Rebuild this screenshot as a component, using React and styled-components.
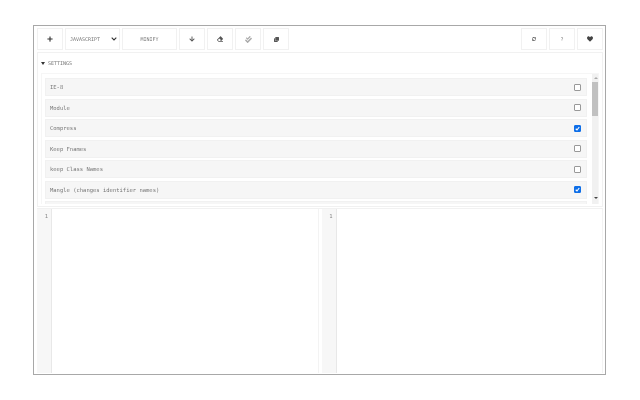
import React from 'react'
import styled, { createGlobalStyle } from 'styled-components'
import { FaArrowDown, FaEraser, FaCheckDouble, FaClone, FaHeart, FaSyncAlt, FaPlus } from 'react-icons/fa'

const Global = createGlobalStyle`
  html, body { margin: 0; padding: 0; background: #fff; width: 640px; height: 400px; overflow: hidden; }
  body { font-family: "DejaVu Sans Mono", monospace; }
`

const Page = styled.div`
  width: 640px;
  height: 400px;
  padding: 25px 34px 25px 33px;
  box-sizing: border-box;
`

const Frame = styled.div`
  height: 100%;
  box-sizing: border-box;
  border: 1px solid #a8a8a8;
  padding: 2px 2px 1px 3px;
  display: flex;
  flex-direction: column;
  will-change: transform;
`

const Toolbar = styled.div`
  display: flex;
  justify-content: space-between;
  height: 23px;
  flex-shrink: 0;
`

const Group = styled.div`
  display: flex;
  gap: 2px;
`

const Btn = styled.div`
  width: ${p => p.$w || 26}px;
  height: 22px;
  box-sizing: border-box;
  border: 1px solid #f1f1f1;
  display: flex;
  align-items: center;
  justify-content: ${p => p.$between ? 'space-between' : 'center'};
  padding: ${p => p.$between ? '0 2px 0 4px' : '0'};
  color: #777;
  font-size: 5px;
  text-transform: uppercase;
`

const Settings = styled.div`
  margin-top: 1px;
  height: 155px;
  box-sizing: border-box;
  border: 1px solid #f1f1f1;
  padding: 0 3px 0 3px;
  flex-shrink: 0;
`

const Summary = styled.div`
  height: 20px;
  display: flex;
  align-items: center;
  gap: 3px;
  font-size: 5px;
  color: #777;
  text-transform: uppercase;
`

const Arrow = styled.span`
  width: 0;
  height: 0;
  border-left: 2px solid transparent;
  border-right: 2px solid transparent;
  border-top: 3px solid #333;
`

const ListBox = styled.div`
  height: 131px;
  box-sizing: border-box;
  border: 1px solid #f6f6f6;
  border-bottom: 0;
  padding-left: 3px;
  display: flex;
  overflow: hidden;
`

const Items = styled.div`
  width: 542px;
  margin-top: 4px;
  display: flex;
  flex-direction: column;
  gap: 2.5px;
  flex-shrink: 0;
`

const Item = styled.div`
  height: 18px;
  flex-shrink: 0;
  box-sizing: border-box;
  border: 1px solid #f1f1f1;
  background: #f6f6f6;
  display: flex;
  align-items: center;
  justify-content: space-between;
  padding: 0 4px;
  font-size: 5.5px;
  color: #777;
`

const Check = styled.span`
  width: 7px;
  height: 7px;
  margin-right: 1px;
  box-sizing: border-box;
  border-radius: 1px;
  border: 1px solid ${p => p.$on ? '#0f6fe8' : '#999'};
  background: ${p => p.$on ? '#0f6fe8' : '#fff'};
  display: flex;
  align-items: center;
  justify-content: center;
`

const Track = styled.div`
  margin-left: 5px;
  width: 8px;
  background: #f1f1f1;
  display: flex;
  flex-direction: column;
  align-items: center;
  padding: 3px 0 5px;
  box-sizing: border-box;
`

const Thumb = styled.div`
  width: 8px;
  height: 34px;
  background: #c1c1c1;
  margin-bottom: auto;
`

const Tick = styled.span`
  width: 0;
  height: 0;
  margin-bottom: ${p => p.$down ? 0 : 3}px;
  border-left: 2px solid transparent;
  border-right: 2px solid transparent;
  ${p => p.$down ? 'border-top: 2px solid #444;' : 'border-bottom: 2px solid #aaa;'}
`

const Editors = styled.div`
  flex: 1;
  margin-top: 1px;
  border-top: 1px solid #f1f1f1;
  display: flex;
  gap: 3px;
`

const Editor = styled.div`
  flex: 1;
  display: flex;
  border-right: 1px solid #f3f3f3;
`

const Gutter = styled.div`
  width: 15px;
  box-sizing: border-box;
  background: #f7f7f7;
  border-right: 1px solid #e8e8e8;
  font-size: 5.5px;
  color: #888;
  text-align: right;
  padding: 4px 3px 0 0;
`

const Code = styled.div`
  flex: 1;
  background: #fff;
`

const Tickmark = () => (
  <svg width="5" height="5" viewBox="0 0 10 10">
    <path d="M1.5 5.5 L4 8 L8.5 2" fill="none" stroke="#fff" strokeWidth="2.2" />
  </svg>
)

const options = [
  ['IE-8', false],
  ['Module', false],
  ['Compress', true],
  ['Keep Fnames', false],
  ['keep Class Names', false],
  ['Mangle (changes identifier names)', true],
]

export default function App() {
  return (
    <Page>
      <Global />
      <Frame>
        <Toolbar>
          <Group>
            <Btn $w={26}><FaPlus size={6} color="#333" /></Btn>
            <Btn $w={55} $between>
              JavaScript
              <svg width="6" height="4" viewBox="0 0 6 4">
                <path d="M0.7 0.7 L3 3 L5.3 0.7" fill="none" stroke="#333" strokeWidth="1.1" />
              </svg>
            </Btn>
            <Btn $w={55}>Minify</Btn>
            <Btn><FaArrowDown size={6} color="#555" /></Btn>
            <Btn><FaEraser size={6} color="#555" /></Btn>
            <Btn><FaCheckDouble size={7} color="#aaa" /></Btn>
            <Btn><FaClone size={5} color="#555" /></Btn>
          </Group>
          <Group>
            <Btn><FaSyncAlt size={4} color="#555" /></Btn>
            <Btn>?</Btn>
            <Btn><FaHeart size={6} color="#444" /></Btn>
          </Group>
        </Toolbar>
        <Settings>
          <Summary><Arrow />Settings</Summary>
          <ListBox>
            <Items>
              {options.map(([label, on]) => (
                <Item key={label}>
                  {label}
                  <Check $on={on}>{on && <Tickmark />}</Check>
                </Item>
              ))}
              <Item />
            </Items>
            <Track>
              <Tick />
              <Thumb />
              <Tick $down />
            </Track>
          </ListBox>
        </Settings>
        <Editors>
          <Editor>
            <Gutter>1</Gutter>
            <Code />
          </Editor>
          <Editor>
            <Gutter>1</Gutter>
            <Code />
          </Editor>
        </Editors>
      </Frame>
    </Page>
  )
}
